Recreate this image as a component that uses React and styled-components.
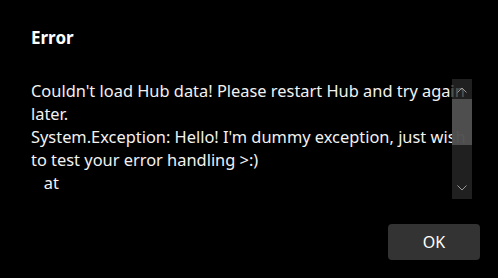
import React from "react";
import styled, { createGlobalStyle } from "styled-components";

const Global = createGlobalStyle`
  html, body { margin: 0; padding: 0; background: #000; }
  body { width: 498px; height: 278px; overflow: hidden; }
`;

const Dialog = styled.div`
  width: 498px;
  height: 278px;
  box-sizing: border-box;
  background: #000;
  color: #fff;
  font-family: "Noto Sans", "Open Sans", sans-serif;
  display: flex;
  flex-direction: column;
  padding: 26px 19px 18px 31px;
`;

const Title = styled.h1`
  margin: 0;
  font-size: 17px;
  font-weight: 700;
  line-height: 24px;
  color: #fff;
`;

const Scroller = styled.div`
  position: relative;
  margin-top: 29px;
  height: 120px;
  width: 441px;
  overflow: hidden;
`;

const Body = styled.div`
  width: 441px;
  font-size: 16.4px;
  line-height: 23px;
  white-space: pre-wrap;
  color: #f2f2f2;
`;

const ScrollBar = styled.div`
  position: absolute;
  top: 0;
  right: 0;
  width: 20px;
  height: 120px;
  background: rgba(41, 41, 41, 0.78);
`;

const Thumb = styled.div`
  position: absolute;
  left: 0;
  top: 20px;
  width: 20px;
  height: 46px;
  background: rgba(85, 85, 85, 0.87);
`;

const Arrow = styled.svg`
  position: absolute;
  left: 5px;
  width: 10px;
  height: 6px;
  ${(p) => (p.$down ? "bottom: 8px;" : "top: 8px;")}
`;

const Footer = styled.div`
  margin-top: auto;
  display: flex;
  justify-content: flex-end;
`;

const Button = styled.button`
  width: 92px;
  height: 36px;
  border: none;
  border-radius: 4px;
  background: #333;
  color: #fff;
  font-family: "Noto Sans", "Open Sans", sans-serif;
  font-size: 16px;
  margin-right: -1px;
`;

export default function App() {
  return (
    <>
      <Global />
      <Dialog>
        <Title>Error</Title>
        <Scroller>
          <Body>
            {"Couldn't load Hub data! Please restart Hub and try again later.\nSystem.Exception: Hello! I'm dummy exception, just wish to test your error handling >:)\n   at"}
          </Body>
          <ScrollBar>
            <Arrow viewBox="0 0 10 6">
              <path d="M0.5 5.5 L5 1 L9.5 5.5" fill="none" stroke="#9a9a9a" strokeWidth="1" />
            </Arrow>
            <Thumb />
            <Arrow $down viewBox="0 0 10 6">
              <path d="M0.5 0.5 L5 5 L9.5 0.5" fill="none" stroke="#9a9a9a" strokeWidth="1" />
            </Arrow>
          </ScrollBar>
        </Scroller>
        <Footer>
          <Button>OK</Button>
        </Footer>
      </Dialog>
    </>
  );
}
